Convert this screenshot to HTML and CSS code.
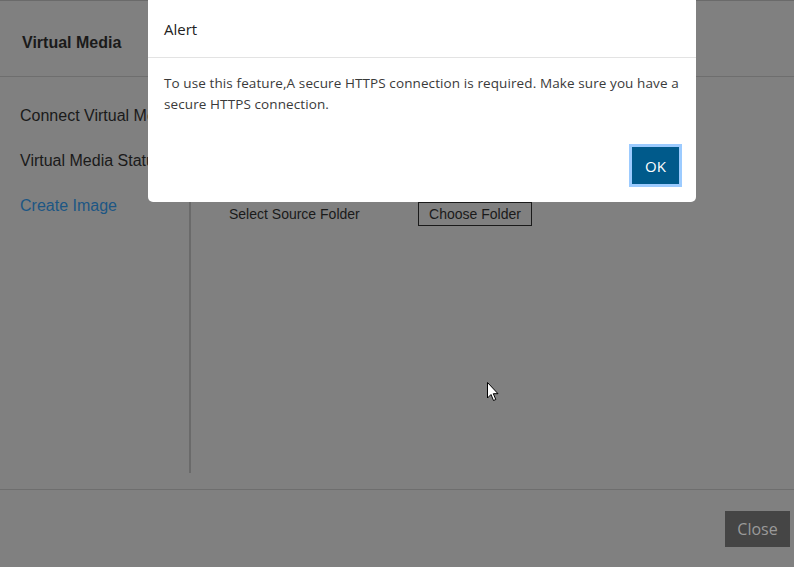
FILE: index.html
```html
<!DOCTYPE html>
<html>
<head>
<meta charset="utf-8">
<link rel="stylesheet" href="styles.css">
</head>
<body>
<div class="page">
  <div class="dlg-header"><h2 class="dlg-title">Virtual Media</h2></div>
  <div class="dlg-body">
    <nav class="side">
      <div class="nav-item">Connect Virtual Media</div>
      <div class="nav-item">Virtual Media Status</div>
      <div class="nav-item active">Create Image</div>
    </nav>
    <div class="content">
      <div class="row">
        <span class="label">Select Source Folder</span>
        <button class="choose">Choose Folder</button>
      </div>
    </div>
  </div>
  <div class="dlg-footer"><button class="close">Close</button></div>
</div>
<div class="modal">
  <div class="modal-header">Alert</div>
  <div class="modal-body">To use this feature,A secure HTTPS connection is required. Make sure you have a secure HTTPS connection.</div>
  <div class="modal-footer"><button class="ok">OK</button></div>
</div>
<svg class="cursor" width="14" height="22" viewBox="0 0 14 22"><path d="M0.5 0.5 L0.5 16 L4 12.5 L6.5 18.5 L8.8 17.5 L6.3 11.7 L11 11.7 Z" fill="#fff" stroke="#000" stroke-width="1"/></svg>
</body>
</html>
```
FILE: styles.css
```css
html, body { margin: 0; padding: 0; }
body {
  width: 794px; height: 567px; overflow: hidden; position: relative;
  background: #808080;
  font-family: "Liberation Sans", Arial, sans-serif;
}
.page { height: 567px; display: flex; flex-direction: column; border-top: 1px solid #6a6a6a; box-sizing: border-box; }
.dlg-header { height: 75px; border-bottom: 1px solid #6e6e6e; display: flex; align-items: center; padding-left: 22px; box-sizing: content-box; }
.dlg-title { margin: 0; font-size: 16px; font-weight: bold; color: #1a1a1a; padding-top: 8px; }
.dlg-body { height: 412px; display: flex; padding: 16px 0 16px; box-sizing: border-box; }
.side { width: 189px; border-right: 2px solid #6a6a6a; box-sizing: content-box; overflow: hidden; }
.nav-item { height: 45px; line-height: 45px; padding-left: 20px; font-size: 16px; color: #1a1a1a; white-space: nowrap; }
.nav-item.active { color: #1c5684; }
.content { flex: 1; padding: 109px 0 0 38px; }
.row { display: flex; align-items: center; height: 24px; }
.label { width: 189px; font-size: 14px; color: #1a1a1a; }
.choose { height: 24px; width: 114px; padding: 0; background: #808080; border: 1px solid #1a1a1a; font-family: "Liberation Sans", Arial, sans-serif; font-size: 14px; color: #1a1a1a; }
.dlg-footer { flex: 1; border-top: 1px solid #6e6e6e; display: flex; justify-content: flex-end; align-items: flex-start; padding: 21px 4px 0 0; }
.close { width: 65px; height: 36px; background: #454545; border: none; color: #9a9a9a; font-family: "Open Sans", sans-serif; font-size: 16px; padding: 0; }

.modal {
  position: absolute; left: 148px; top: 0; width: 548px; height: 202px;
  background: #fff; border-radius: 0 0 5px 5px; box-sizing: border-box;
  font-family: "Open Sans", sans-serif; color: #333;
  display: flex; flex-direction: column;
}
.modal-header { height: 57px; border-bottom: 1px solid #e3e3e3; display: flex; align-items: center; padding-left: 16px; font-size: 15px; color: #222; }
.modal-body { padding: 15px 16px 0; font-size: 13.5px; letter-spacing: 0.1px; line-height: 21px; color: #3a3a3a; height: 89px; box-sizing: border-box; }
.modal-footer { display: flex; justify-content: flex-end; padding-right: 17px; }
.ok { width: 47px; height: 37px; background: #005a8b; color: #fff; border: none; font-family: "Open Sans", sans-serif; font-size: 15px; box-shadow: 0 0 0 3px #9ccbff; padding: 0; }
.cursor { position: absolute; left: 487px; top: 382px; }
```
